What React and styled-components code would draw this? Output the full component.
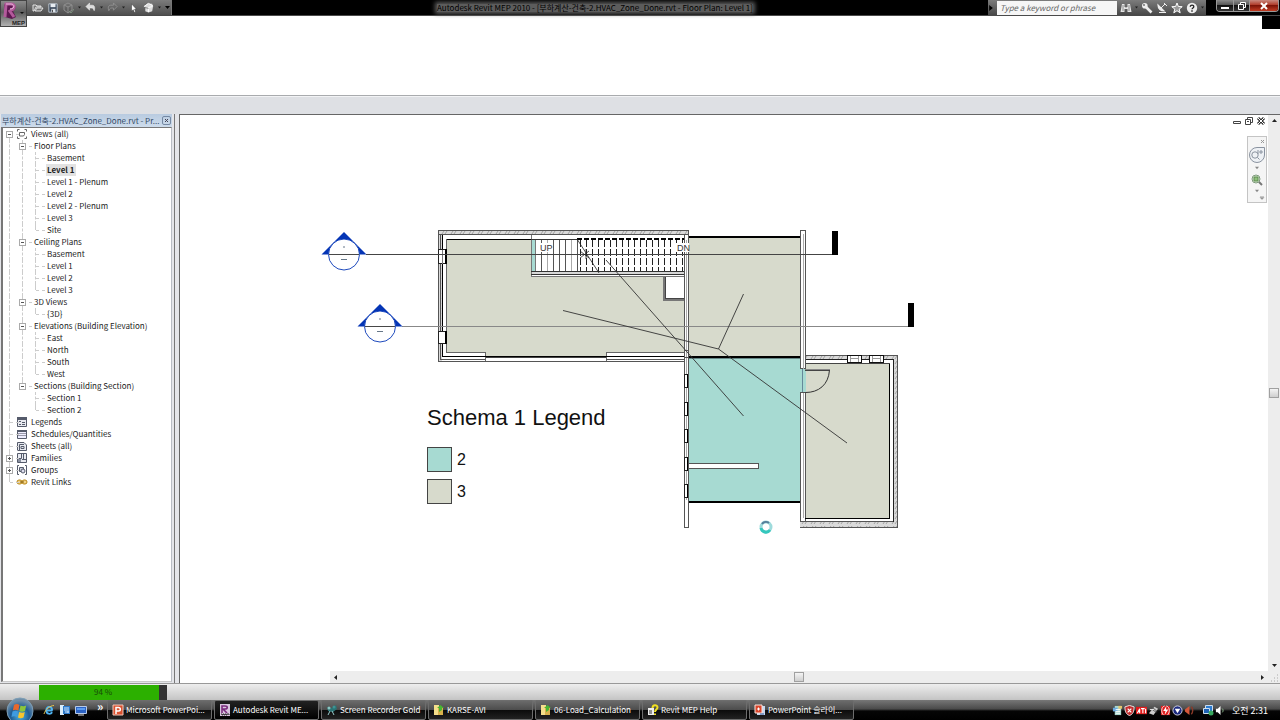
import React, {useState} from 'react';
import styled, {createGlobalStyle, css} from 'styled-components';

const FONT = "'Noto Sans CJK KR', 'Noto Sans', sans-serif";
const BEIGE = '#d7dacc';
const TEAL = '#a7dad2';
const BLUE = '#0535b5';

const GlobalStyle = createGlobalStyle`
  * { box-sizing: border-box; }
  body {
    margin: 0;
    background: #fff;
    font-family: ${FONT};
    font-size: 8px;
    overflow: hidden;
  }
  button {
    border: 0;
    padding: 0;
    background: none;
    font: inherit;
    color: inherit;
  }
  svg { display: block; flex: none; }
`;

const Window = styled.div`
  display: flex;
  flex-direction: column;
  height: 100vh;
`;

/* ---------- title bar ---------- */

const TitleBar = styled.header`
  position: relative;
  display: flex;
  align-items: stretch;
  height: 16px;
  background: #000;
  border-bottom: 1px solid #4a4a4a;
`;

const AppButton = styled.button`
  position: absolute;
  z-index: 2;
  left: 0;
  top: 0;
  width: 27px;
  height: 27px;
  background: linear-gradient(#8a8a8a, #5c5c5c 45%, #b2b2b2);
  border: 1px solid #444;
`;

const QuickAccess = styled.div`
  display: flex;
  align-items: center;
  gap: 4px;
  margin-left: 27px;
  padding: 0 2px 0 5px;
  width: 145px;
  justify-content: space-between;
  background: linear-gradient(#7c7c7c, #4e4e4e);
  border-right: 1px solid #777;
`;

const TitleText = styled.h1`
  flex: 1;
  margin: 0;
  padding-left: 30px;
  text-align: center;
  font-size: 8px;
  font-weight: 400;
  line-height: 15px;
  color: #000;
  white-space: nowrap;

  span {
    background: #5c5c5c;
    box-shadow: 0 0 4px 2px #5c5c5c;
    line-height: 8px;
    display: inline-block;
  }
`;

const InfoCenter = styled.div`
  display: flex;
  align-items: center;
  justify-content: space-between;
  width: 218px;
  padding-right: 2px;
  background: linear-gradient(#7c7c7c, #484848);
`;

const Search = styled.input`
  width: 120px;
  height: 14px;
  padding: 0 3px;
  border: 0;
  background: #f6f6f6;
  font-family: ${FONT};
  font-size: 8px;
  font-style: italic;
  &::placeholder { color: #666; opacity: 1; }
`;

const WindowButtons = styled.div`
  display: flex;
  align-self: flex-start;
  height: 12px;
  margin: 0 1px 0 10px;
  border: 1px solid #999;
  border-top: 0;
  border-radius: 0 0 4px 4px;
  overflow: hidden;
`;

const WindowButton = styled.button`
  display: flex;
  align-items: center;
  justify-content: center;
  width: ${({$close}) => ($close ? 29 : 16)}px;
  background: ${({$close}) => ($close
    ? 'linear-gradient(#c98a80, #b03a28 45%, #7d1408 50%, #c23c22)'
    : 'linear-gradient(#8b8b8b, #555 45%, #111 50%, #333)')};
  & + & { border-left: 1px solid #999; }
`;

const Ribbon = styled.div`
  display: flex;
  justify-content: flex-end;
  height: 80px;
  border-bottom: 1px solid #a9abae;
`;

const RibbonBlock = styled.div`
  width: 18px;
  height: 13px;
  background: #000;
`;

const OptionsBar = styled.div`
  height: 18px;
  background: #dee0e4;
  border-top: 1px solid #f2f3f5;
`;

/* ---------- project browser ---------- */

const Main = styled.main`
  display: flex;
  flex: 1;
  min-height: 0;
  background: #e4e5e9;
  border-bottom: 1px solid #999;
`;

const Browser = styled.aside`
  display: flex;
  flex-direction: column;
  width: 175px;
  padding: 0 2px 1px 1px;
  border-right: 1px solid #777;
`;

const BrowserTitle = styled.div`
  display: flex;
  align-items: center;
  justify-content: space-between;
  height: 13px;
  padding: 0 1px;
  background: linear-gradient(#b9cbe0, #cddcec);
  color: #334a66;
  line-height: 13px;
  white-space: nowrap;
`;

const BrowserClose = styled.button`
  display: flex;
  align-items: center;
  justify-content: center;
  width: 9px;
  height: 9px;
  border: 1px solid #7488a3;
  border-radius: 2px;
`;

const Tree = styled.ul`
  flex: 1;
  margin: 0;
  padding: 0;
  list-style: none;
  background: #fff;
  border: 1px solid #777;
  border-left-width: 2px;
  border-right-color: #b8bcc4;
  border-bottom-color: #c9c9c9;
`;

const Row = styled.li`
  display: flex;
  align-items: center;
  height: 12px;
  color: #222;
  line-height: 12px;
  white-space: nowrap;
`;

const Guide = styled.span`
  position: relative;
  display: flex;
  align-items: center;
  justify-content: center;
  width: 13px;
  height: 12px;

  ${({$line}) => $line && css`
    &::before {
      content: '';
      position: absolute;
      left: 6px;
      top: ${$line === 'first' ? 6 : 0}px;
      height: ${$line === 'full' ? 12 : 6}px;
      border-left: 1px dashed #ccc;
    }
  `}
  ${({$branch}) => $branch && css`
    &::after {
      content: '';
      position: absolute;
      left: 7px;
      top: 6px;
      width: 9px;
      border-top: 1px dashed #ccc;
    }
  `}
`;

const Expander = styled.button`
  position: relative;
  z-index: 1;
  display: flex;
  width: 7px;
  height: 7px;
  background: #fff;
`;

const Label = styled.span`
  margin-left: ${({$depth}) => [2, 4, 4][$depth]}px;
  padding: 0 2px 0 1px;
  ${({$active}) => $active && css`
    background: #e2e2e2;
    font-weight: 700;
  `}
`;

/* ---------- drawing view ---------- */

const View = styled.section`
  display: grid;
  grid-template-columns: minmax(0, 1fr) 12px;
  grid-template-rows: minmax(0, 1fr) 12px;
  flex: 1;
  margin-left: 4px;
  background: #fff;
  border: 1px solid #666;
  border-width: 1px 0 0 1px;
`;

const Sheet = styled.div`
  position: relative;
  overflow: hidden;
`;

const Plan = styled.svg`
  position: absolute;
  left: 140px;
  top: 105px;
`;

const Legend = styled.div`
  position: absolute;
  left: 247px;
  top: 290px;
  font-family: 'Liberation Sans', sans-serif;
  font-size: 16px;
  color: #111;

  h2 {
    margin: 0 0 16px;
    font-size: 22px;
    font-weight: 400;
    line-height: 26px;
  }
`;

const LegendRow = styled.div`
  display: flex;
  align-items: center;
  gap: 5px;
  margin-bottom: 7px;
`;

const Swatch = styled.span`
  width: 25px;
  height: 25px;
  border: 1px solid #444;
  background: ${({$color}) => $color};
`;

const ViewButtons = styled.div`
  position: absolute;
  right: 2px;
  top: 1px;
  display: flex;
  gap: 2px;
`;

const NavBar = styled.div`
  position: absolute;
  right: 1px;
  top: 21px;
  display: flex;
  flex-direction: column;
  align-items: center;
  justify-content: space-between;
  width: 20px;
  height: 67px;
  padding: 2px 0;
  background: #f5f5f5;
  border: 1px solid #c4c4c4;
`;

const ScrollBar = styled.div`
  display: flex;
  align-items: center;
  justify-content: space-between;
  flex-direction: ${({$vertical}) => ($vertical ? 'column' : 'row')};
  margin-left: ${({$vertical}) => ($vertical ? 0 : 150)}px;
  padding: ${({$vertical}) => ($vertical ? '3px 0' : '0 3px')};
  background: #ededed;
`;

const Thumb = styled.span`
  width: 10px;
  height: 10px;
  background: linear-gradient(#f4f4f4, #cfcfcf);
  border: 1px solid #a0a0a0;
`;

const Grip = styled.div`
  display: flex;
  align-items: flex-end;
  justify-content: flex-end;
  background: #ededed;
`;

/* ---------- status and task bar ---------- */

const StatusBar = styled.div`
  display: flex;
  height: 16px;
  padding: 1px 0 0 39px;
  background: linear-gradient(#eee, #c4c4c4);
`;

const Progress = styled.div`
  position: relative;
  width: 128px;
  background: #333;
  line-height: 14px;
  text-align: center;
  color: #164b08;

  span { position: relative; }
`;

const ProgressFill = styled.div`
  position: absolute;
  left: 0;
  top: 0;
  bottom: 0;
  background: #2cb000;
`;

const TaskBar = styled.footer`
  position: relative;
  display: flex;
  align-items: stretch;
  height: 20px;
  background: linear-gradient(#777, #4a4a4a 45%, #050505 55%, #000);
  color: #fff;
`;

const StartButton = styled.button`
  position: absolute;
  left: 6px;
  top: -3px;
`;

const QuickLaunch = styled.div`
  display: flex;
  align-items: center;
  gap: 4px;
  width: 107px;
  padding-left: 43px;
`;

const More = styled.span`
  align-self: flex-start;
  margin-left: 6px;
  font-size: 12px;
  font-weight: 700;
  line-height: 12px;
`;

const Tasks = styled.nav`
  display: flex;
  flex: 1;
  gap: 2px;
`;

const Task = styled.button`
  display: flex;
  align-items: center;
  gap: 2px;
  width: 105px;
  padding: 0 4px;
  color: #fff;
  font-size: 8px;
  line-height: 14px;
  white-space: nowrap;
  border: 1px solid #6d6d6d;
  border-radius: 2px;
  background: ${({$active}) => ($active
    ? 'linear-gradient(#222, #111 50%, #000)'
    : 'linear-gradient(#6a6a6a, #4d4d4d 48%, #0c0c0c 52%, #222)')};
`;

const Tray = styled.div`
  display: flex;
  align-items: center;
  gap: 1px;
  padding-right: 12px;
`;

const TrayGap = styled.span`
  width: 5px;
`;

const Clock = styled.time`
  margin-left: 5px;
  font-size: 9px;
`;

/* ---------- icons ---------- */

const Caret = ({color = '#222', dir = 'down', size = 5}) => {
  const d = {
    down: 'M0 1h5L2.5 4z',
    up: 'M0 4h5L2.5 1z',
    left: 'M4 0v5L1 2.5z',
    right: 'M1 0v5L4 2.5z',
  }[dir];
  return <svg width={size} height={size} viewBox="0 0 5 5"><path d={d} fill={color} /></svg>;
};

const ICONS = {
  open: <path d="M1 3h3l1 1h4v1H4L2 9H1zM5 6h6L9 9H3z" fill="#777" stroke="#eee" strokeWidth=".9" />,
  save: <>
    <path d="M1 1h10v10H1z" fill="#3c4a5c" stroke="#c9d2dc" />
    <path d="M3 1h6v4H3z" fill="#e8edf2" /><path d="M4 7h5v4H4z" fill="#dfe5ea" /><path d="M5 8h1v3H5z" fill="#333" />
  </>,
  sync: <>
    <path d="M6 1l4 2v5l-4 3-4-3V3zM2 3l4 2 4-2M6 5v6" fill="none" stroke="#8e8e8e" />
    <path d="M7 9l2 2 3-4" fill="none" stroke="#7d907d" />
  </>,
  undo: <path d="M1 5l4-4v2.5h3c3 0 3 4 2 6-1-3-2-3-5-3V9z" fill="#ddd" stroke="#fff" strokeWidth=".5" />,
  redo: <path d="M11 5L7 1v2.500H4c-3 0-3 4-2 6 1-3 2-3 5-3V9z" fill="none" stroke="#999" strokeWidth=".8" />,
  arrow: <path d="M3 1v9l2-2 1.500 3.500 1.500-.7L6.700 7.500H9z" fill="#fff" stroke="#333" strokeWidth=".6" />,
  home: <>
    <path d="M1 5l4-3.500L10 2l1 3-1 5-4 1.500L2.500 10V6z" fill="#ddd" />
    <path d="M1 5l5-3.500 5 3M6 6v5M6 6l4-1" fill="none" stroke="#fff" />
    <path d="M2 6l4 1" stroke="#555" strokeWidth=".7" />
  </>,
  binoculars: <>
    <path d="M2 2h2.500v3h3V2H10l1.500 8H7.500V7h-3v3H.5z" fill="#e5e5e5" />
    <path d="M3 3v6M9 3v6M5.500 5.500h1" stroke="#777" strokeWidth=".8" />
  </>,
  key: <>
    <path d="M5 5l5.500 5.500" stroke="#eee" strokeWidth="2.600" />
    <circle cx="3.800" cy="3.800" r="2.800" fill="#eee" /><circle cx="3" cy="3" r=".9" fill="#666" />
  </>,
  dish: <>
    <path d="M2 3c0 4 3 6 6 6zM3 10.500h7" fill="#eee" stroke="#eee" strokeWidth="1.200" />
    <path d="M5 6l4-4M8 1l3 3" stroke="#eee" />
  </>,
  star: <path d="M6 1l1.400 3.500 3.800.2-3 2.400 1 3.700L6 8.700 2.800 10.800l1-3.700-3-2.400 3.800-.2z" fill="#999" stroke="#fff" />,
  help: <>
    <circle cx="6" cy="6" r="5.200" fill="#eee" />
    <path d="M4.300 4.800c0-2.300 3.600-2.100 3.500-.1C7.700 6 6 5.900 6 7.300" fill="none" stroke="#222" strokeWidth="1.300" />
    <path d="M5.300 8.300h1.400v1.400H5.300z" fill="#222" />
  </>,
  views: <path d="M1.500 3.500v-2h2M8.500 1.500h2v2M10.500 8.500v2h-2M3.500 10.500h-2v-2M3.500 4.500h5v2l-1 1.500h-4z" fill="none" stroke="#666" />,
  legends: <>
    <path d="M1.500 1.500h9v9h-9z" fill="#e8eaf0" stroke="#555b6b" /><path d="M1 1h10v3H1z" fill="#555b6b" />
    <path d="M3 5.500h2M3 8.500h2M6 6.500h3M6 8.500h3" stroke="#555b6b" />
  </>,
  schedules: <>
    <path d="M1.500 2.500h9v8h-9z" fill="#eef" stroke="#555b6b" /><path d="M1 2h10v2H1z" fill="#555b6b" />
    <path d="M2 5.500h8M2 7.500h8" stroke="#99a" />
  </>,
  sheets: <path d="M1.500 10V2.500H8L10.500 5v5.500h-9M3.500 10V4.500H8M5 6.500h3v2H5z" fill="#e8eaf0" stroke="#555b6b" />,
  families: <>
    <path d="M1.500 1.500h9v9h-9z" fill="#e8eaf0" stroke="#555b6b" />
    <path d="M1.500 6.500h4v-5M7.500 2v5M10 7.500H6" fill="none" stroke="#555b6b" /><path d="M2 7h3v3H2z" fill="#8990a0" />
  </>,
  groups: <>
    <path d="M3 1.500H1.500v9H3M9 1.500h1.500v9H9" fill="none" stroke="#555b6b" />
    <path d="M3.500 3.500h4v4h-4z" fill="#c7ccd8" stroke="#555b6b" /><circle cx="7" cy="7" r="2" fill="#dde" stroke="#555b6b" />
  </>,
  links: <>
    <rect x="1" y="4" width="5" height="4" rx="2" fill="#f3d488" stroke="#b98512" />
    <rect x="6" y="4" width="5" height="4" rx="2" fill="#f3d488" stroke="#b98512" /><path d="M4 6h4" stroke="#7c5a10" />
  </>,
  ie: <>
    <path d="M9.500 6.500H3.200c0-5 6-4.500 6 0M3.200 6.500c0 4 4.500 4 6 1.800" fill="none" stroke="#4fb4f2" strokeWidth="1.800" />
    <path d="M1 10C2 6 7 1.500 11 1.500" fill="none" stroke="#e8c54a" />
  </>,
  desktop: <>
    <path d="M1 1h4v10H1z" fill="#d8ecfb" /><path d="M4 2h7v8H4z" fill="#2c78c9" />
    <path d="M5 4h5M5 6h3M6 8h4M9 5v4" stroke="#cce6ff" />
  </>,
  monitor: <>
    <path d="M.5 2.500h11v7H.5z" fill="#2b62c4" stroke="#b8cbe8" /><path d="M2 4h8v2H2z" fill="#5b9cf0" /><path d="M3 11h6" stroke="#ddd" />
  </>,
  ppt: <>
    <path d="M1 1h10v10H1z" fill="#d9502e" stroke="#f4c7b8" />
    <path d="M4 10V3.500h2.500c2.500 0 2.500 3.500 0 3.500H4" fill="none" stroke="#fff" strokeWidth="1.500" />
  </>,
  revit: <>
    <path d="M1 0h10v12H1z" fill="#d9c5df" /><path d="M3 9V2h3c3 0 3 3 0 3H4l4 4" fill="none" stroke="#7a2c7d" strokeWidth="1.600" />
    <path d="M2 10h1v1h1v-1h1v1h1v-1h1v1h1v-1h2v1" fill="none" stroke="#222" strokeWidth=".9" />
  </>,
  recorder: <>
    <path d="M1 3l5 1 4-3 1 4-4 3-5-1z" fill="#2b7475" /><path d="M4 7l-2 4M6 7l2 4" stroke="#9cc" />
    <circle cx="3" cy="4" r="1.500" fill="#8cc4c0" /><circle cx="8" cy="3" r="1.500" fill="#3d9393" />
  </>,
  folder: <>
    <path d="M1 1h5v10H1z" fill="#f5df8b" /><path d="M5 3h5v8H5z" fill="#d9b24c" />
    <path d="M6 8V4H4l3.500-3L11 4H9v2z" fill="#49b533" />
  </>,
  chm: <>
    <path d="M1 4h6v7H1z" fill="#eee" /><path d="M2 7h3M2 9h3" stroke="#333" />
    <path d="M5.500 4c0-3.500 5-3.500 5-.5C10.500 5.500 8 5.500 8 8M8 9.500V11" fill="none" stroke="#f0e020" strokeWidth="2" />
  </>,
  slide: <>
    <path d="M3 2h8v9H3z" fill="#c7d8ef" /><path d="M1 1h7v8H1z" fill="#d8442a" stroke="#fbe2da" />
    <path d="M3 5h3M4.500 3.500v3" stroke="#fff" /><path d="M6 10h4" stroke="#335a9c" />
  </>,
  update: <>
    <path d="M3 1h7v10H3z" fill="#a9d8cf" /><path d="M1 3h5v4H1z" fill="#6aaae0" />
    <path d="M4 5h5M4 7h5M4 9h5" stroke="#fff" /><path d="M7 1h4v3H7z" fill="#e6c66c" />
  </>,
  shield: <>
    <path d="M6 .5l5 1.500c0 5-1 8-5 9.500C2 10 1 7 1 2z" fill="#c22d2d" stroke="#eee" /><path d="M4 4l4 4M8 4L4 8" stroke="#fff" strokeWidth="1.300" />
  </>,
  ati: <>
    <path d="M0 2h12v8H0z" fill="#e01b1b" /><path d="M1.500 9L4 4v5M5.500 4h4M7.500 4v5M10.500 4v5" fill="none" stroke="#fff" strokeWidth="1.200" />
  </>,
  usb: <><path d="M1 9l6-7 4 2-5 7z" fill="#ccc" /><path d="M2 3l7 5M4 2l6 5" stroke="#555" /><path d="M2 5h4" stroke="#fff" /></>,
  flash: <>
    <path d="M1 1h10v10H1z" fill="#e02020" />
    <path d="M5 1C1 2 1 9 4 11M7 1c4 1 4 8 1 10" fill="none" stroke="#fff" strokeWidth=".9" />
    <path d="M7 1L3.500 6.500H6L5 11l4-6H6.500z" fill="#fff" />
  </>,
  vee: <><circle cx="6" cy="6" r="5" fill="#1b2a80" stroke="#dde" /><path d="M3 4h6L6 9z" fill="#fff" /></>,
  horn: <><path d="M1 5l5-4v10L1 7z" fill="#d4573a" /><path d="M8 2c2 2 2 6 0 8" fill="none" stroke="#8b3a28" strokeWidth="1.500" /></>,
  network: <>
    <path d="M3.500 1.500h7v6h-7z" fill="#2c7bd0" stroke="#cde" /><path d="M1.500 4.500h6v5h-6z" fill="#1d61b4" stroke="#cde" />
    <circle cx="9" cy="9" r="2.500" fill="#37a85e" />
  </>,
  volume: <><path d="M1 4h2l3-3v10L3 8H1z" fill="#fff" /><path d="M8 4c1 1 1 3 0 4" fill="none" stroke="#9c9" /></>,
};

const Icon = ({name, size = 12}) => (
  <svg width={size} height={size} viewBox="0 0 12 12">{ICONS[name]}</svg>
);

/* ---------- project browser tree ---------- */

const TREE = [
  {text: 'Views (all)', icon: 'views', children: [
    {text: 'Floor Plans', children: ['Basement', 'Level 1', 'Level 1 - Plenum', 'Level 2', 'Level 2 - Plenum', 'Level 3', 'Site']},
    {text: 'Ceiling Plans', children: ['Basement', 'Level 1', 'Level 2', 'Level 3']},
    {text: '3D Views', children: ['{3D}']},
    {text: 'Elevations (Building Elevation)', children: ['East', 'North', 'South', 'West']},
    {text: 'Sections (Building Section)', children: ['Section 1', 'Section 2']},
  ]},
  {text: 'Legends', icon: 'legends'},
  {text: 'Schedules/Quantities', icon: 'schedules'},
  {text: 'Sheets (all)', icon: 'sheets'},
  {text: 'Families', icon: 'families', closed: true},
  {text: 'Groups', icon: 'groups', closed: true},
  {text: 'Revit Links', icon: 'links'},
];

const Toggle = ({plus, label, onClick}) => (
  <Expander aria-label={label} onClick={onClick}>
    <svg width="7" height="7" shapeRendering="crispEdges">
      <path d="M.5.5h6v6h-6z" fill="#fff" stroke="#aaa" />
      <path d={plus ? 'M2 3.500h3M3.500 2v3' : 'M2 3.500h3'} stroke="#555" />
    </svg>
  </Expander>
);

const ProjectTree = () => {
  const [closed, setClosed] = useState([]);
  const [active, setActive] = useState('Floor Plans/Level 1');

  const toggle = (key) => {
    setClosed(closed.includes(key) ? closed.filter((k) => k !== key) : [...closed, key]);
  };

  const rows = [];
  TREE.forEach((root, r) => {
    const lastRoot = r === TREE.length - 1;
    rows.push(
      <Row key={root.text}>
        <Guide $line={r === 0 ? 'first' : lastRoot ? 'last' : 'full'} $branch>
          {(root.children || root.closed) && (
            <Toggle plus={root.closed || closed.includes(root.text)} label={root.text} onClick={() => toggle(root.text)} />
          )}
        </Guide>
        <Icon name={root.icon} />
        <Label $depth={0}>{root.text}</Label>
      </Row>
    );
    if (!root.children || closed.includes(root.text)) return;
    root.children.forEach((group, g) => {
      const lastGroup = g === root.children.length - 1;
      rows.push(
        <Row key={group.text}>
          <Guide $line="full" />
          <Guide $line={lastGroup ? 'last' : 'full'} $branch>
            <Toggle plus={closed.includes(group.text)} label={group.text} onClick={() => toggle(group.text)} />
          </Guide>
          <Label $depth={1}>{group.text}</Label>
        </Row>
      );
      if (closed.includes(group.text)) return;
      group.children.forEach((leaf, l) => {
        const key = `${group.text}/${leaf}`;
        rows.push(
          <Row key={key} onClick={() => setActive(key)}>
            <Guide $line="full" />
            <Guide $line={lastGroup ? undefined : 'full'} />
            <Guide $line={l === group.children.length - 1 ? 'last' : 'full'} $branch />
            <Label $depth={2} $active={key === active}>{leaf}</Label>
          </Row>
        );
      });
    });
  });
  return <Tree>{rows}</Tree>;
};

/* ---------- floor plan ---------- */

const SectionMark = ({x, y}) => (
  <g transform={`translate(${x} ${y})`}>
    <path d="M-22.500 0L0-22.500 22.500 0z" fill={BLUE} stroke="none" />
    <circle r="15.500" fill="#fff" stroke={BLUE} strokeWidth=".9" />
    <path d="M-15 0h30" stroke="#333" strokeWidth=".9" />
    <path d="M-1-7.500h2M-3 5h6" stroke="#678" />
  </g>
);

const range = (n) => Array.from({length: n}, (_, i) => i);

const FloorPlan = () => (
  <Plan width="600" height="320" viewBox="320 220 600 320" fill="none" stroke="#222">
    <defs>
      <pattern id="hatch" width="9" height="5" patternUnits="userSpaceOnUse">
        <path d="M0 0h9v5H0z" fill="#dadada" stroke="none" />
        <path d="M1 4l2-3M4 4l2-3" stroke="#888" strokeWidth=".7" />
      </pattern>
    </defs>

    <g shapeRendering="crispEdges">
      {/* zones */}
      <g stroke="none">
        <path d="M447 239h238v118H447zM689 236h111v120H689zM805 363h84v155h-84z" fill={BEIGE} />
        <path d="M689 359h112v142H689zM801 369h5v23h-5z" fill={TEAL} />
      </g>

      {/* west wing walls */}
      <path d="M438 230h251v5H438zM438 230h4v131h-4z" fill="url(#hatch)" stroke="none" />
      <path d="M443 352h42v9h-42zM607 352h78v9h-78z" fill="#fff" stroke="none" />
      <path d="M438.500 361.500v-131h250V235M440.500 234.500V359M438 234.500h250" stroke="#555" />
      <path d="M442.500 235v121.500M447 239.500h84M577 239.500h108" stroke="#000" />
      <path d="M446.500 239v113.500h39v9M606.500 361.500v-9H685" stroke="#666" />
      <path d="M438 361.500h247M440 359.500h45M606 359.500h79" stroke="#555" />
      <path d="M442 356.500h243" stroke="#000" />
      <path d="M486 357.500h120" stroke="#444" />
      <path d="M438.500 249.500h8v14h-8zM438.500 331.500h8v12h-8z" fill="#fff" stroke="#222" />
      <path d="M442.500 250v14" stroke="#777" />
      <path d="M446 249v15M446 331v13" stroke="#000" strokeWidth="2" />

      {/* stairs */}
      <path d="M531 239h154v38H531z" fill="#fff" stroke="none" />
      <path d="M532 239h3v32h-3z" fill={TEAL} stroke="none" />
      <path d="M531 272h154v2H531z" fill="#d8d8d8" stroke="none" />
      <path d="M531.500 235v41.500M535.500 240v31" stroke="#777" />
      <path d="M531 239.500h46M531 271.500h154M531 274.500h154" stroke="#333" />
      <path d="M531 276.500h154" stroke="#777" />
      {range(7).map((i) => (
        <path key={i} d={`M${541.5 + i * 6} 240v31`} stroke={i === 1 || i === 5 ? '#aaa' : '#555'} />
      ))}
      {range(18).map((i) => (
        <path key={i} d={`M${580.5 + i * 6} 240v31`} stroke="#222" strokeDasharray="7 2" />
      ))}
      <path d="M577 239h108" stroke="#000" strokeWidth="2" strokeDasharray="5 2" />
      <path d="M663 277h22v24h-22z" fill="#fff" stroke="none" />
      <path d="M664 277v23.500M663 300h25" stroke="#777" strokeWidth="2" />
      <path d="M665.500 277v21.500H685" stroke="#444" />

      {/* wall between wings */}
      <path d="M685 235h3v292h-3z" fill="#fff" stroke="none" />
      <path d="M684.500 235v292.500h4V235" stroke="#555" />
      <path d="M686.500 240v260" stroke="#aaa" />
      <path d="M684 350.500h5M684 357.500h5" stroke="#555" />
      {[374, 402, 429, 457, 484].map((y) => (
        <g key={y}>
          <path d={`M684.500 ${y}.500h3v13h-3z`} fill="#fff" stroke="#222" />
          <path d={`M687.500 ${y}v14`} stroke="#000" />
        </g>
      ))}

      {/* middle block */}
      <path d="M689 236.500h111M689 357h111M689 501.500h112" stroke="#000" strokeWidth="2" />
      <path d="M689 358.500h111" stroke="#688" />
      <path d="M688.500 463.500h70v5h-70z" fill="#fff" stroke="#555" />

      {/* east wall */}
      <path d="M800.500 230.500h5v138h-5zM800.500 392.500h5v134h-5z" fill="#fff" stroke="#555" />
      <path d="M803.500 234v135M803.500 393v125" stroke="#aaa" />
      <path d="M802.500 369v23" stroke="#689" />

      {/* east wing */}
      <path d="M806 355h92v4h-92zM800 522h98v5h-98zM894 355h4v172h-4z" fill="url(#hatch)" stroke="none" />
      <path d="M806 355.500h91.500v171.500H800M800 521.500h93" stroke="#555" />
      <path d="M806 359.500h87.500v162" stroke="#222" />
      <path d="M889.500 363v155.500H805" stroke="#000" />
      <path d="M806 363.500h84" stroke="#444" />
      <path d="M847.500 355.500h14v7h-14zM869.500 355.500h14v7h-14z" fill="#fff" stroke="#111" />
      <path d="M850.500 356v6M858.500 356v6M872.500 356v6M880.500 356v6M851 358.500h7M873 358.500h7" stroke="#999" />
      <path d="M805 369.500h25" stroke="#888" />
      <path d="M805 370.500h24" stroke="#444" />

      {/* section lines */}
      <path d="M366 254.500h466" stroke="#444" />
      <path d="M402 326.500h506" stroke="#888" />
      <path d="M832 231h6v24h-6zM908 303h6v24h-6z" fill="#000" stroke="none" />
    </g>

    <path d="M829.500 370c-1 15-11 22.500-24 22.500" stroke="#333" />
    <path d="M577 239l22 34M580 251l9 7M580 258l9-7M586 249v10" stroke="#222" strokeWidth=".8" />
    <path d="M563 310.500l155.500 38.500L743.500 294M718.500 349L847 443M606 260l137.500 156" stroke="#333" strokeWidth=".9" />

    <SectionMark x={344} y={254.5} />
    <SectionMark x={380} y={326.5} />

    <g stroke="none" fontFamily="Liberation Sans, sans-serif" fontSize="9" fill="#333">
      <path d="M539 243h14v9h-14zM676 243h13v9h-13z" fill="#fff" />
      <text x="540" y="251">UP</text>
      <text x="677" y="251">DN</text>
    </g>

    <circle cx="766" cy="527" r="5" stroke="#9edbdc" strokeWidth="3" />
    <path d="M761 528a5 5 0 0 0 9 2" stroke="#35c7bd" strokeWidth="3" />
    <path d="M762 524a5 5 0 0 1 7-1" stroke="#557f9b" strokeWidth="2" />
  </Plan>
);

/* ---------- window ---------- */

const TASKS = [
  {icon: 'ppt', text: 'Microsoft PowerPoi...'},
  {icon: 'revit', text: 'Autodesk Revit ME...', active: true},
  {icon: 'recorder', text: 'Screen Recorder Gold'},
  {icon: 'folder', text: 'KARSE-AVI'},
  {icon: 'folder', text: '06-Load_Calculation'},
  {icon: 'chm', text: 'Revit MEP Help'},
  {icon: 'slide', text: 'PowerPoint 슬라이...'},
];

const App = () => (
  <Window>
    <GlobalStyle />
    <TitleBar>
      <AppButton aria-label="Application menu">
        <svg width="25" height="25" viewBox="1 1 25 25">
          <path d="M4 5l2-2 7 1c4 1 3 6 0 7l3 6-4 2-7-2z" fill="#5d1850" />
          <path d="M5 17L6 4l5 0c5 0 4 6-1 6M9 10l5 7" fill="none" stroke="#b35a9b" strokeWidth="3" />
          <path d="M6 4l5 0c4 0 4 5-1 5" fill="none" stroke="#e9b8dc" />
          <path d="M20 12h4l-2 2z" fill="#111" />
          <text x="12" y="25" fontSize="6" fontWeight="700" fill="#222" fontFamily="Liberation Sans, sans-serif">MEP</text>
        </svg>
      </AppButton>
      <QuickAccess>
        <Icon name="open" /><Icon name="save" size={10} /><Icon name="sync" />
        <Caret size={3} /><Icon name="undo" size={11} />
        <Caret size={3} /><Icon name="redo" size={11} />
        <Caret size={3} /><Icon name="arrow" size={10} /><Icon name="home" size={11} />
        <Caret size={3} /><Caret color="#000" />
      </QuickAccess>
      <TitleText><span>Autodesk Revit MEP 2010 - [부하계산-건축-2.HVAC_Zone_Done.rvt - Floor Plan: Level 1]</span></TitleText>
      <InfoCenter>
        <Caret dir="right" color="#000" size={6} />
        <Search aria-label="Search" placeholder="Type a keyword or phrase" />
        <Icon name="binoculars" /><Caret size={3} />
        <Icon name="key" /><Icon name="dish" /><Icon name="star" /><Icon name="help" />
        <Caret size={3} />
      </InfoCenter>
      <WindowButtons>
        <WindowButton aria-label="Minimize"><svg width="8" height="8"><path d="M0 5h8v2H0z" fill="#fff" /></svg></WindowButton>
        <WindowButton aria-label="Restore">
          <svg width="8" height="8"><path d="M2.500 2V.5h5v5H6M.5 2.500h5v5h-5z" fill="#333" stroke="#fff" /></svg>
        </WindowButton>
        <WindowButton aria-label="Close" $close>
          <svg width="8" height="8"><path d="M1 1l6 6M7 1L1 7" stroke="#fff" strokeWidth="2" /></svg>
        </WindowButton>
      </WindowButtons>
    </TitleBar>
    <Ribbon><RibbonBlock /></Ribbon>
    <OptionsBar />

    <Main>
      <Browser>
        <BrowserTitle>
          <span>부하계산-건축-2.HVAC_Zone_Done.rvt - Pr...</span>
          <BrowserClose aria-label="Close browser">
            <svg width="5" height="5"><path d="M1 1l3 3M4 1L1 4" stroke="#445" /></svg>
          </BrowserClose>
        </BrowserTitle>
        <ProjectTree />
      </Browser>

      <View>
        <Sheet>
          <FloorPlan />
          <Legend>
            <h2>Schema 1 Legend</h2>
            <LegendRow><Swatch $color={TEAL} />2</LegendRow>
            <LegendRow><Swatch $color={BEIGE} />3</LegendRow>
          </Legend>
          <ViewButtons>
            <button aria-label="Minimize view">
              <svg width="10" height="10"><path d="M1.500 5.500h7v2h-7z" fill="#fff" stroke="#444" /></svg>
            </button>
            <button aria-label="Restore view">
              <svg width="10" height="10"><path d="M3.500 3V1.500h5v5H7M1.500 3.500h5v5h-5zM3 5.500h2" fill="none" stroke="#444" /></svg>
            </button>
            <button aria-label="Close view">
              <svg width="10" height="10">
                <path d="M2 2l6 6M8 2L2 8" stroke="#333" strokeWidth="3" /><path d="M2 2l6 6M8 2L2 8" stroke="#fff" />
              </svg>
            </button>
          </ViewButtons>
          <NavBar>
            <svg width="18" height="5"><path d="M13 1l3 3M16 1l-3 3" stroke="#999" /></svg>
            <svg width="18" height="16" viewBox="0 0 18 16" fill="none" stroke="#8a93a0">
              <path d="M9 .5h7.500V8A7.500 7.500 0 1 1 9 .5z" fill="#eef1f5" />
              <circle cx="7" cy="8" r="3.200" /><path d="M9.500 10.500l2 2M11 5h4M13 3v4M10 3v4" />
            </svg>
            <Caret size={4} color="#888" />
            <svg width="12" height="12" fill="none">
              <circle cx="5" cy="5" r="4" fill="#dcecd4" stroke="#7f9a7d" /><path d="M3 3h4v4H3z" fill="#8fc17c" stroke="#5c8a50" />
              <path d="M8 8l3 3" stroke="#777" strokeWidth="2" />
            </svg>
            <Caret size={4} color="#888" />
            <svg width="18" height="4"><path d="M12 .5h4M12 1.500h4l-2 2z" fill="#888" stroke="#999" strokeWidth=".5" /></svg>
          </NavBar>
        </Sheet>
        <ScrollBar $vertical>
          <Caret dir="up" size={5} /><Thumb /><Caret size={5} />
        </ScrollBar>
        <ScrollBar>
          <Caret dir="left" size={5} /><Thumb /><Caret dir="right" size={5} />
        </ScrollBar>
        <Grip>
          <svg width="10" height="10"><path d="M7 2h1M7 5h1M4 5h1M7 8h1M4 8h1M1 8h1" stroke="#aaa" /></svg>
        </Grip>
      </View>
    </Main>

    <StatusBar>
      <Progress>
        <ProgressFill style={{width: '94%'}} />
        <span>94 %</span>
      </Progress>
    </StatusBar>

    <TaskBar>
      <StartButton aria-label="Start">
        <svg width="28" height="23" viewBox="0 0 28 23">
          <defs>
            <radialGradient id="orb" cx=".5" cy=".7" r=".6">
              <stop offset="0" stopColor="#4fb3e0" /><stop offset=".6" stopColor="#1f5c94" /><stop offset="1" stopColor="#6f8ea8" />
            </radialGradient>
          </defs>
          <circle cx="14" cy="14" r="13" fill="url(#orb)" stroke="#7c9db5" />
          <path d="M8 8c2-1.500 4-1 5.500 0l-1.200 5.500c-2-1-4-1-5.500 0z" fill="#e8682c" />
          <path d="M14.500 8.500c2 1 4 1 5.700 0L19 14c-2 1-4 1-5.600 0z" fill="#8cc63a" />
          <path d="M6.500 14.500c2-1 4-1 5.500 0L11 20c-2-1-4-1-5.500 0z" fill="#3f9be0" />
          <path d="M13.200 15c2 1 4 1 5.600 0l-1.300 5.500c-2 1-4 1-5.500 0z" fill="#f7c52d" />
        </svg>
      </StartButton>
      <QuickLaunch>
        <Icon name="ie" /><Icon name="desktop" /><Icon name="monitor" />
        <More>»</More>
      </QuickLaunch>
      <Tasks>
        {TASKS.map(({icon, text, active}) => (
          <Task key={text} $active={active}><Icon name={icon} />{text}</Task>
        ))}
      </Tasks>
      <Tray>
        {['update', 'shield', 'ati', 'usb', 'flash', 'vee', 'horn'].map((name) => <Icon key={name} name={name} size={11} />)}
        <TrayGap />
        <Icon name="network" /><Icon name="volume" size={11} />
        <Clock>오전 2:31</Clock>
      </Tray>
    </TaskBar>
  </Window>
);

export default App;
